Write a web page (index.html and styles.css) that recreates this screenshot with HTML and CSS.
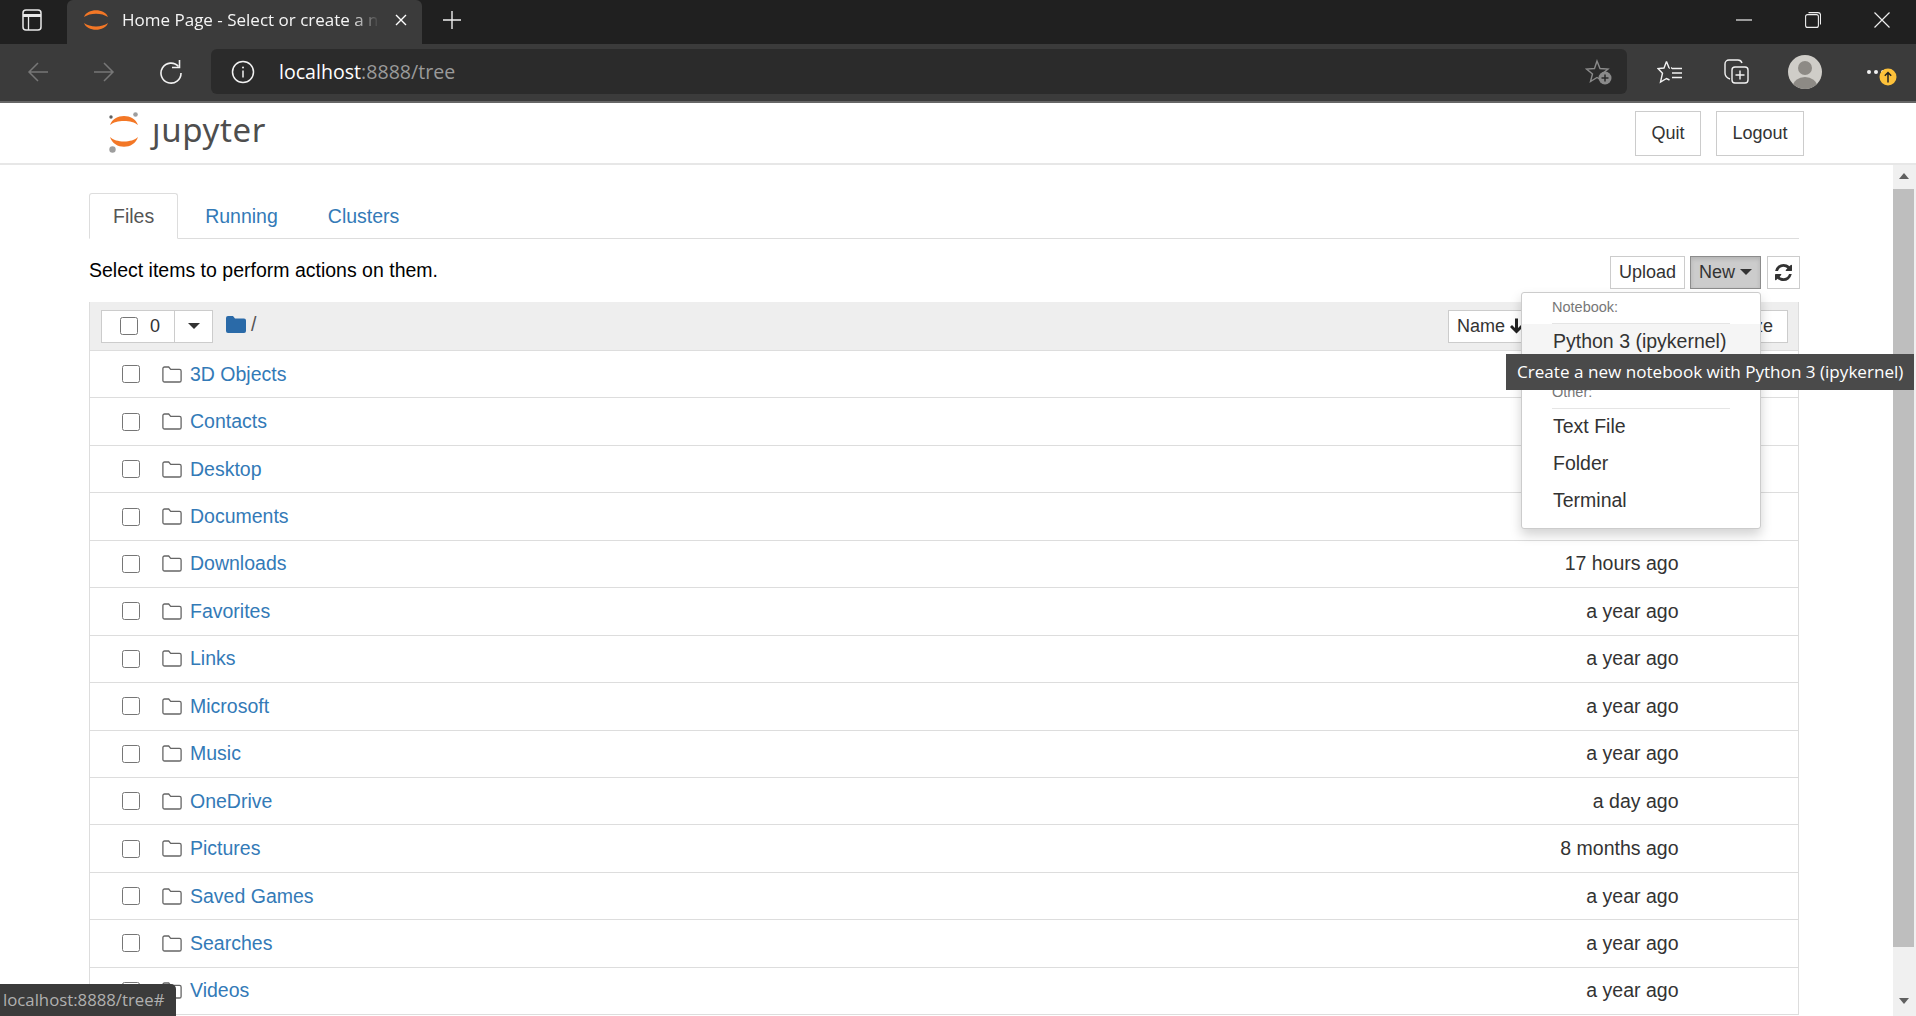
FILE: index.html
```html
<!DOCTYPE html>
<html lang="en">
   <head>
      <meta charset="UTF-8">
      <title>Home Page - Select or create a notebook</title>
      <link rel="stylesheet" href="styles.css">
   </head>
   <body>
      <svg class="defs" width="0" height="0">
         <symbol id="folder-open" viewBox="0 0 20 17">
            <path d="M2.500 1h4.200l2 2.400h8.800a1.600 1.600 0 0 1 1.600 1.600v9.400a1.600 1.600 0 0 1-1.600 1.600h-15a1.600 1.600 0 0 1-1.600-1.600v-11.800a1.600 1.600 0 0 1 1.600-1.600z" fill="none" stroke="#666" stroke-width="1.300"/>
         </symbol>
         <symbol id="arc-logo" viewBox="0 0 28 28">
            <path d="M2 11C5 2 23 2 26 11C20 6.500 8 6.500 2 11z" fill="#f37726"/>
            <path d="M2 17C5 26 23 26 26 17C20 21.500 8 21.500 2 17z" fill="#f37726"/>
         </symbol>
      </svg>

      <div class="tabstrip">
         <div class="strip-left">
            <svg width="20" height="22" viewBox="0 0 20 22"><rect x="1" y="1" width="18" height="20" rx="3" fill="none" stroke="#e8e8e8" stroke-width="1.500"/><path d="M1 6.500h18" stroke="#e8e8e8" stroke-width="3"/><path d="M6.500 7v14" stroke="#e8e8e8" stroke-width="1.300"/></svg>
         </div>
         <div class="browser-tab">
            <svg class="favicon" width="28" height="28"><use href="#arc-logo"/></svg>
            <span class="tab-title">Home Page - Select or create a n</span>
            <svg width="14" height="14" viewBox="0 0 14 14"><path d="M2 2l10 10M12 2L2 12" stroke="#fff" stroke-width="1.400"/></svg>
         </div>
         <svg class="new-tab" width="20" height="20" viewBox="0 0 20 20"><path d="M10 1v18M1 10h18" stroke="#eee" stroke-width="1.400"/></svg>
         <div class="window-btns">
            <svg width="16" height="16" viewBox="0 0 16 16"><path d="M0 8h16" stroke="#eee" stroke-width="1.200"/></svg>
            <svg width="16" height="16" viewBox="0 0 16 16"><rect x="0.600" y="2.600" width="12.800" height="12.800" rx="2" fill="none" stroke="#eee" stroke-width="1.100"/><path d="M3.500 0.600h9.500a2.500 2.500 0 0 1 2.500 2.500v9.500" fill="none" stroke="#eee" stroke-width="1.100"/></svg>
            <svg width="16" height="16" viewBox="0 0 16 16"><path d="M0.500 0.500l15 15M15.500 0.500l-15 15" stroke="#eee" stroke-width="1.200"/></svg>
         </div>
      </div>

      <div class="toolbar">
         <svg class="nav-btn" width="22" height="22" viewBox="0 0 22 22"><path d="M21 11H2M11 2l-9 9 9 9" fill="none" stroke="#777" stroke-width="1.500"/></svg>
         <svg class="nav-btn" width="22" height="22" viewBox="0 0 22 22"><path d="M1 11h19M11 2l9 9-9 9" fill="none" stroke="#777" stroke-width="1.500"/></svg>
         <svg class="nav-btn" width="24" height="26" viewBox="0 0 24 26"><path d="M19.500 7.500A10 10 0 1 0 22 14" fill="none" stroke="#f2f2f2" stroke-width="1.600"/><path d="M20.500 1v7.500H13" fill="none" stroke="#f2f2f2" stroke-width="1.600"/></svg>
         <div class="address">
            <svg width="24" height="24" viewBox="0 0 24 24"><circle cx="12" cy="12" r="10.500" fill="none" stroke="#f2f2f2" stroke-width="1.500"/><path d="M12 10.500v7" stroke="#f2f2f2" stroke-width="1.500"/><circle cx="12" cy="7.500" r="1" fill="#f2f2f2"/></svg>
            <span class="url"><span class="host">localhost</span>:8888/tree</span>
            <svg class="star-add" width="28" height="26" viewBox="0 0 28 26"><path d="M12 2l3 7.500 8 .5-6 5 2 7.500-7-4-6.500 4 2-7.500L1.500 10l8-.5z" fill="none" stroke="#8a8a8a" stroke-width="1.400"/><circle cx="20" cy="19" r="6.500" fill="#8a8a8a"/><path d="M20 15.500v7M16.500 19h7" stroke="#2b2b2b" stroke-width="1.500"/></svg>
         </div>
         <div class="tool-icons">
            <svg width="26" height="24" viewBox="0 0 26 24"><path d="M9.500 1.500l2.600 6.500h-.1M9.500 1.500L7 8 1 8.500l4.500 4.700L3.500 22l6-3.500 3 1.500M14 8h1" fill="none" stroke="#f2f2f2" stroke-width="1.400"/><path d="M15 8.500h10M15 13h10M15 17.500h10" stroke="#f2f2f2" stroke-width="1.400"/></svg>
            <svg width="26" height="26" viewBox="0 0 26 26"><path d="M6 20C3 19 1 17 1 14V5a4 4 0 0 1 4-4h9c2 0 3.500 1.500 4 3" fill="none" stroke="#f2f2f2" stroke-width="1.400"/><rect x="8" y="8" width="16" height="16" rx="3" fill="none" stroke="#f2f2f2" stroke-width="1.400"/><path d="M16 11.500v9M11.500 16h9" stroke="#f2f2f2" stroke-width="1.400"/></svg>
            <svg class="avatar" width="34" height="34" viewBox="0 0 34 34"><clipPath id="avatar-clip"><circle cx="17" cy="17" r="17"/></clipPath><circle cx="17" cy="17" r="17" fill="#cfcdc8"/><g clip-path="url(#avatar-clip)"><circle cx="17" cy="13" r="7" fill="#8d8a85"/><ellipse cx="17" cy="31" rx="12" ry="9" fill="#8d8a85"/></g></svg>
            <div class="more">
               <svg width="26" height="8" viewBox="0 0 26 8"><circle cx="3" cy="4" r="2" fill="#f2f2f2"/><circle cx="10" cy="4" r="2" fill="#f2f2f2"/><circle cx="17" cy="4" r="2" fill="#f2f2f2"/></svg>
               <svg class="update-badge" width="18" height="18" viewBox="0 0 18 18"><circle cx="9" cy="9" r="8.500" fill="#fdc13a"/><path d="M9 14.500V4.500M5.800 7.700L9 4.500l3.200 3.200" fill="none" stroke="#222" stroke-width="1.500"/></svg>
            </div>
         </div>
      </div>

      <header class="site-header">
         <div class="brand">
            <svg width="34" height="42" viewBox="0 0 34 42"><path d="M3 14C7 2 27 2 31 14C25 8.500 9 8.500 3 14z" fill="#f37726"/><path d="M3 26C7 39 27 39 31 26C25 32 9 32 3 26z" fill="#f37726"/><circle cx="28.500" cy="3.500" r="2.300" fill="#9e9e9e"/><circle cx="4" cy="6" r="1.700" fill="#616161"/><circle cx="5.500" cy="38.500" r="3.200" fill="#9e9e9e"/></svg>
            <span class="wordmark">ȷupyter</span>
         </div>
         <div class="header-btns">
            <a class="btn btn-tall">Quit</a>
            <a class="btn btn-tall">Logout</a>
         </div>
      </header>

      <div class="viewport">
         <div class="page">
            <div class="content">
               <ul class="nav-tabs">
                  <li class="active">Files</li>
                  <li>Running</li>
                  <li>Clusters</li>
               </ul>

               <div class="actions">
                  <span class="hint">Select items to perform actions on them.</span>
                  <div class="action-btns">
                     <a class="btn btn-upload">Upload</a>
                     <a class="btn btn-open">New <i class="caret"></i></a>
                     <a class="btn btn-icon">
                        <svg width="17" height="17" viewBox="0 0 1536 1536"><path d="M1511 928q0 5-1 7-64 268-268 434.500T764 1536q-146 0-282.500-55T238 1324l-129 129q-19 19-45 19t-45-19-19-45V960q0-26 19-45t45-19h448q26 0 45 19t19 45-19 45l-137 137q71 66 161 102t187 36q134 0 250-65t186-179q11-17 53-117 8-23 30-23h192q13 0 22.500 9.500T1511 928zm25-800v448q0 26-19 45t-45 19h-448q-26 0-45-19t-19-45 19-45l138-138Q969 256 768 256q-134 0-250 65T332 500q-11 17-53 117-8 23-30 23H50q-13 0-22.500-9.500T18 608v-7q65-268 270-434.500T768 0q146 0 284 55.500T1297 212l130-129q19-19 45-19t45 19 19 45z" fill="#333"/></svg>
                     </a>
                  </div>
               </div>

               <div class="file-list">
                  <div class="list-head">
                     <div class="select-group">
                        <span class="select-count"><input type="checkbox"> 0</span>
                        <span class="select-arrow"><i class="caret"></i></span>
                     </div>
                     <svg class="root-folder" width="20" height="17" viewBox="0 0 20 17"><path d="M2 0h5l2 2.500h9a2 2 0 0 1 2 2V15a2 2 0 0 1-2 2H2a2 2 0 0 1-2-2V2a2 2 0 0 1 2-2z" fill="#2a6aa8"/></svg>
                     <span class="crumb">/</span>
                     <div class="sort-btns">
                        <a class="btn sort-name">Name <svg width="15" height="16" viewBox="0 0 15 16"><path d="M7.500 15.500L1 9l2-2 3 3V.500h3V10l3-3 2 2z" fill="#222"/></svg></a>
                        <a class="btn sort-size">File size</a>
                     </div>
                  </div>
                  <div class="row"><input type="checkbox"><svg class="folder" width="20" height="17"><use href="#folder-open"/></svg><a class="name">3D Objects</a></div>
                  <div class="row"><input type="checkbox"><svg class="folder" width="20" height="17"><use href="#folder-open"/></svg><a class="name">Contacts</a></div>
                  <div class="row"><input type="checkbox"><svg class="folder" width="20" height="17"><use href="#folder-open"/></svg><a class="name">Desktop</a></div>
                  <div class="row"><input type="checkbox"><svg class="folder" width="20" height="17"><use href="#folder-open"/></svg><a class="name">Documents</a></div>
                  <div class="row"><input type="checkbox"><svg class="folder" width="20" height="17"><use href="#folder-open"/></svg><a class="name">Downloads</a><span class="date">17 hours ago</span></div>
                  <div class="row"><input type="checkbox"><svg class="folder" width="20" height="17"><use href="#folder-open"/></svg><a class="name">Favorites</a><span class="date">a year ago</span></div>
                  <div class="row"><input type="checkbox"><svg class="folder" width="20" height="17"><use href="#folder-open"/></svg><a class="name">Links</a><span class="date">a year ago</span></div>
                  <div class="row"><input type="checkbox"><svg class="folder" width="20" height="17"><use href="#folder-open"/></svg><a class="name">Microsoft</a><span class="date">a year ago</span></div>
                  <div class="row"><input type="checkbox"><svg class="folder" width="20" height="17"><use href="#folder-open"/></svg><a class="name">Music</a><span class="date">a year ago</span></div>
                  <div class="row"><input type="checkbox"><svg class="folder" width="20" height="17"><use href="#folder-open"/></svg><a class="name">OneDrive</a><span class="date">a day ago</span></div>
                  <div class="row"><input type="checkbox"><svg class="folder" width="20" height="17"><use href="#folder-open"/></svg><a class="name">Pictures</a><span class="date">8 months ago</span></div>
                  <div class="row"><input type="checkbox"><svg class="folder" width="20" height="17"><use href="#folder-open"/></svg><a class="name">Saved Games</a><span class="date">a year ago</span></div>
                  <div class="row"><input type="checkbox"><svg class="folder" width="20" height="17"><use href="#folder-open"/></svg><a class="name">Searches</a><span class="date">a year ago</span></div>
                  <div class="row"><input type="checkbox"><svg class="folder" width="20" height="17"><use href="#folder-open"/></svg><a class="name">Videos</a><span class="date">a year ago</span></div>
               </div>
            </div>

            <div class="new-menu">
               <div class="menu-label">Notebook:</div>
               <div class="menu-item hover">Python 3 (ipykernel)</div>
               <div class="menu-label menu-other">Other:</div>
               <div class="menu-item">Text File</div>
               <div class="menu-item">Folder</div>
               <div class="menu-item">Terminal</div>
            </div>
            <div class="tooltip">Create a new notebook with Python 3 (ipykernel)</div>
         </div>

         <div class="scrollbar">
            <i class="arrow-up"></i>
            <div class="thumb"></div>
            <i class="arrow-down"></i>
         </div>
      </div>

      <div class="status">localhost:8888/tree#</div>
   </body>
</html>
```

FILE: styles.css
```css
* {
box-sizing: border-box;
}
html, body {
height: 100%;
}
body {
margin: 0;
overflow: hidden;
background-color: #fff;
color: #000;
font-family: "Liberation Sans", Arial, sans-serif;
font-size: 19.5px;
position: relative;
}
.defs {
position: absolute;
}

/* browser frame */
.tabstrip {
height: 44px;
background-color: #202020;
display: flex;
align-items: center;
padding-bottom: 5px;
}
.strip-left {
width: 67px;
padding-left: 22px;
display: flex;
}
.browser-tab {
width: 355px;
height: 44px;
margin-bottom: -5px;
padding: 0 14px 5px 15px;
background-color: #3b3b3b;
border-radius: 6px 6px 0 0;
display: flex;
align-items: center;
color: #f5f5f5;
font-family: "Open Sans", sans-serif;
font-size: 17px;
}
.favicon {
flex: none;
margin-right: 12px;
}
.tab-title {
flex: 1;
white-space: nowrap;
-webkit-mask-image: linear-gradient(to right, #000 88%, transparent 99%);
mask-image: linear-gradient(to right, #000 88%, transparent 99%);
margin-right: 12px;
}
.new-tab {
margin-left: 20px;
}
.window-btns {
margin-left: auto;
display: flex;
gap: 53px;
padding-right: 26px;
}
.toolbar {
height: 59px;
background-color: #3b3b3b;
border-bottom: 2px solid #666;
display: flex;
align-items: center;
padding: 0 0 2px 27px;
}
.nav-btn {
margin-right: 44px;
flex: none;
}
.address {
width: 1416px;
height: 45px;
margin-left: -16px;
background-color: #2b2b2b;
border-radius: 6px;
display: flex;
align-items: center;
padding: 0 14px 0 20px;
}
.url {
margin-left: 24px;
font-family: "Open Sans", sans-serif;
font-size: 19.6px;
color: #9a9a9a;
}
.host {
color: #fff;
}
.star-add {
margin-left: auto;
}
.tool-icons {
display: flex;
align-items: center;
gap: 41px;
padding-left: 30px;
}
.avatar {
margin: 0 3px 0 -3px;
}
.more {
position: relative;
width: 26px;
display: flex;
}
.update-badge {
position: absolute;
left: 13px;
top: 0;
}

/* jupyter page */
.site-header {
height: 62px;
border-bottom: 2px solid #e7e7e7;
display: flex;
align-items: flex-start;
justify-content: space-between;
padding: 8px 112px 0 107px;
}
.brand {
display: flex;
align-items: flex-start;
gap: 11px;
}
.wordmark {
font-family: "Noto Sans", sans-serif;
font-size: 33px;
line-height: 38px;
color: #4e4e4e;
letter-spacing: .02em;
}
.header-btns {
display: flex;
gap: 15px;
}
.btn {
display: inline-flex;
align-items: center;
justify-content: center;
height: 33px;
padding: 0 8px;
border: 1px solid #ccc;
background-color: #fff;
color: #333;
font-size: 18px;
white-space: nowrap;
}
.btn-tall {
height: 45px;
padding: 0 15.5px;
}
.viewport {
height: 851px;
display: flex;
}
.page {
flex: 1;
min-width: 0;
position: relative;
}
.content {
padding: 28px 94px 0 89px;
}
.nav-tabs {
list-style: none;
margin: 0;
padding: 0;
height: 46px;
display: flex;
border-bottom: 1px solid #ddd;
color: #337ab7;
font-size: 19.5px;
}
.nav-tabs li {
height: 46px;
padding: 0 23px;
margin-right: 4px;
line-height: 46px;
}
.nav-tabs .active {
color: #555;
background-color: #fff;
border: 1px solid #ddd;
border-bottom-color: #fff;
border-radius: 3px 3px 0 0;
line-height: 44px;
}
.actions {
height: 63px;
display: flex;
align-items: center;
justify-content: space-between;
}
.hint {
margin-bottom: 1px;
}
.action-btns {
display: flex;
align-items: center;
margin: 3px -1px 0 0;
}
.btn-upload {
margin-right: 5px;
}
.btn-open {
background-color: #ccc;
border-color: #8c8c8c;
box-shadow: inset 0 2px 4px rgba(0, 0, 0, .125);
margin-right: 6px;
}
.btn-icon {
width: 33px;
padding: 0;
}
.caret {
display: inline-block;
margin-left: 5px;
border-top: 6px solid #333;
border-left: 6px solid transparent;
border-right: 6px solid transparent;
}
.file-list {
border-left: 1px solid #ddd;
border-right: 1px solid #ddd;
}
.list-head {
height: 49px;
background-color: #eee;
border-bottom: 1px solid #ddd;
display: flex;
align-items: center;
padding: 0 10px 0 11px;
}
.select-group {
display: flex;
height: 33px;
background-color: #fff;
border: 1px solid #ccc;
color: #333;
font-size: 18px;
}
.select-count {
width: 73px;
display: flex;
align-items: center;
justify-content: flex-end;
gap: 12px;
padding-right: 14px;
border-right: 1px solid #ccc;
}
.select-arrow {
width: 37px;
display: flex;
align-items: center;
justify-content: center;
padding-right: 5px;
}
.root-folder {
margin: 0 0 4px 13px;
}
.crumb {
margin: 0 0 4px 5px;
color: #555;
}
.sort-btns {
margin-left: auto;
width: 340px;
display: flex;
justify-content: space-between;
}
.sort-name {
gap: 4px;
}
.sort-size {
padding: 0 14px;
}
input[type="checkbox"] {
width: 18px;
height: 18px;
margin: 0;
flex: none;
}
.row {
height: 47.45px;
border-bottom: 1px solid #ddd;
display: flex;
align-items: center;
padding-left: 32px;
color: #333;
}
.folder {
flex: none;
margin-left: 22px;
}
.name {
margin-left: 8px;
color: #337ab7;
}
.date {
margin-left: auto;
margin-right: 119.5px;
}

/* open dropdown */
.new-menu {
position: absolute;
left: 1521px;
top: 127px;
width: 240px;
height: 237px;
background-color: #fff;
border: 1px solid #ccc;
border-radius: 3px;
box-shadow: 0 6px 12px rgba(0, 0, 0, .175);
color: #333;
}
.menu-label {
height: 31px;
margin: 0 30px;
padding-top: 6px;
border-bottom: 1px solid #e5e5e5;
font-size: 14.5px;
color: #777;
}
.menu-other {
margin-top: 17px;
}
.menu-item {
height: 37px;
line-height: 34px;
padding-left: 31px;
}
.hover {
background-color: #f5f5f5;
}
.tooltip {
position: absolute;
z-index: 2;
left: 1506px;
top: 189px;
width: 408px;
height: 36px;
padding-left: 11px;
background-color: #4a4a4a;
color: #fff;
font-family: "Open Sans", sans-serif;
font-size: 17.1px;
line-height: 35px;
white-space: nowrap;
}

/* page scrollbar */
.scrollbar {
width: 23px;
background-color: #f0f0f0;
position: relative;
}
.thumb {
position: absolute;
left: 0;
right: 2px;
top: 24px;
bottom: 69px;
background-color: #bebebe;
}
.arrow-up, .arrow-down {
position: absolute;
left: 6px;
border-left: 5px solid transparent;
border-right: 5px solid transparent;
}
.arrow-up {
top: 8px;
border-bottom: 6px solid #606060;
}
.arrow-down {
bottom: 12px;
border-top: 6px solid #606060;
}
.status {
position: absolute;
z-index: 2;
left: 0;
bottom: 0;
width: 176px;
height: 32px;
padding-left: 3px;
background-color: #3b3b3b;
border-radius: 0 5px 0 0;
color: #b0b0b0;
font-family: "Open Sans", sans-serif;
font-size: 16.75px;
line-height: 31px;
white-space: nowrap;
}
```
